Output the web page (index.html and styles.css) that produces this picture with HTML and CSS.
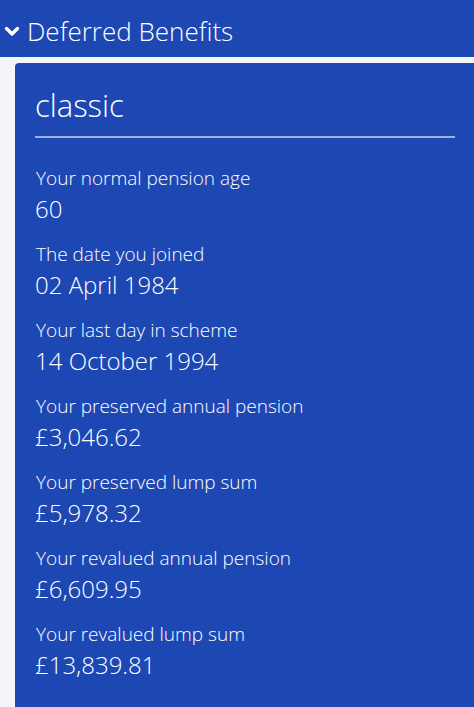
FILE: index.html
```html
<!DOCTYPE html>
<html lang="en">
<head>
<meta charset="utf-8">
<link rel="stylesheet" href="styles.css">
<title>Deferred Benefits</title>
</head>
<body>
<header class="section-head">
  <svg class="chevron" viewBox="0 0 16 11" width="16" height="11" aria-hidden="true">
    <path d="M2.5 2.5 L8 8 L13.5 2.5" fill="none" stroke="#ffffff" stroke-width="3.4" stroke-linecap="round" stroke-linejoin="round"/>
  </svg>
  <span class="section-title">Deferred Benefits</span>
</header>
<main class="card">
  <h2 class="scheme">classic</h2>
  <dl class="facts">
    <div class="fact"><dt>Your normal pension age</dt><dd>60</dd></div>
    <div class="fact"><dt>The date you joined</dt><dd>02 April 1984</dd></div>
    <div class="fact"><dt>Your last day in scheme</dt><dd>14 October 1994</dd></div>
    <div class="fact"><dt>Your preserved annual pension</dt><dd>£3,046.62</dd></div>
    <div class="fact"><dt>Your preserved lump sum</dt><dd>£5,978.32</dd></div>
    <div class="fact"><dt>Your revalued annual pension</dt><dd>£6,609.95</dd></div>
    <div class="fact"><dt>Your revalued lump sum</dt><dd>£13,839.81</dd></div>
  </dl>
</main>
</body>
</html>
```
FILE: styles.css
```css
html, body {
  margin: 0;
  padding: 0;
}
body {
  background: #f3f5f9;
  font-family: "Open Sans", "Noto Sans", sans-serif;
  font-weight: 300;
  color: #ffffff;
  height: 707px;
  overflow: hidden;
  display: flex;
  flex-direction: column;
}
.section-head {
  background: #1d47b3;
  height: 57px;
  display: flex;
  align-items: center;
  padding-left: 4px;
  gap: 7px;
  flex: none;
}
.chevron {
  margin-top: 6px;
}
.section-title {
  font-size: 26px;
  font-weight: 300;
  line-height: 1;
  margin-top: 4px;
}
.card {
  flex: 1;
  margin: 6px 0 0 15px;
  background: #1d47b3;
  border-radius: 4px 0 0 0;
  padding: 0 19px 0 21px;
}
.scheme {
  margin: 0 0 0 -1px;
  padding-top: 22px;
  padding-bottom: 11px;
  font-size: 31px;
  font-weight: 300;
  line-height: 40px;
  border-bottom: 2px solid #9cb0e4;
}
.facts {
  margin: 27px 0 0 0;
  display: flex;
  flex-direction: column;
}
.fact {
  height: 76px;
}
.fact dt {
  font-size: 19px;
  line-height: 26px;
}
.fact dd {
  margin: 3px 0 0 -1px;
  font-size: 24px;
  line-height: 30px;
}
```
